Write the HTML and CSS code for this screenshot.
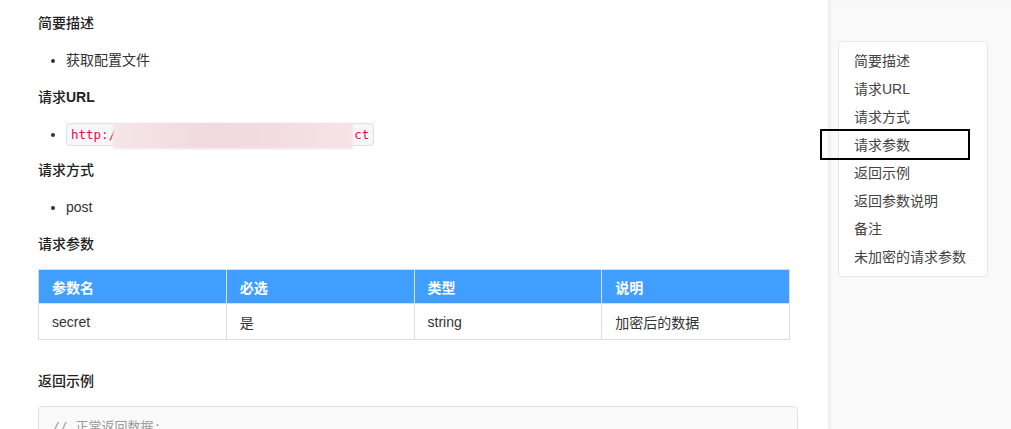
FILE: index.html
```html
<!DOCTYPE html>
<html lang="zh">
<head>
<meta charset="utf-8">
<title>接口文档</title>
<link rel="stylesheet" href="styles.css">
</head>
<body>
<div class="page">
  <main class="doc">
    <h3 class="h">简要描述</h3>
    <ul class="list"><li>获取配置文件</li></ul>
    <h3 class="h">请求<span class="latin">URL</span></h3>
    <ul class="list list-code"><li><code class="code">http:/<span class="blur"></span>ct</code></li></ul>
    <h3 class="h">请求方式</h3>
    <ul class="list"><li>post</li></ul>
    <h3 class="h">请求参数</h3>
    <table class="tbl">
      <thead>
        <tr><th>参数名</th><th>必选</th><th>类型</th><th>说明</th></tr>
      </thead>
      <tbody>
        <tr><td>secret</td><td>是</td><td>string</td><td>加密后的数据</td></tr>
      </tbody>
    </table>
    <h3 class="h h-gap">返回示例</h3>
    <pre class="pre">// 正常返回数据:</pre>
  </main>
  <aside class="side">
    <nav class="toc">
      <a class="toc-item">简要描述</a>
      <a class="toc-item">请求URL</a>
      <a class="toc-item">请求方式</a>
      <a class="toc-item">请求参数</a>
      <a class="toc-item">返回示例</a>
      <a class="toc-item">返回参数说明</a>
      <a class="toc-item">备注</a>
      <a class="toc-item">未加密的请求参数</a>
    </nav>
    <div class="mark"></div>
  </aside>
</div>
</body>
</html>
```

FILE: styles.css
```css
html, body {
  margin: 0;
  padding: 0;
  background: #fff;
}
body {
  font-family: "Liberation Sans", "Noto Sans CJK SC", sans-serif;
  font-size: 14px;
  color: #333;
  overflow: hidden;
  height: 429px;
}
.page {
  display: flex;
  height: 429px;
}
.doc {
  width: 790px;
  flex: none;
  padding: 13px 0 0 38px;
  box-sizing: content-box;
}
.h {
  margin: 0;
  font-size: 14px;
  line-height: 20px;
  font-weight: 500;
  color: #222;
}
.latin {
  font-weight: bold;
}
.h-gap {
  margin-top: 31px;
}
.list {
  margin: 17px 0 17px;
  padding-left: 28px;
  line-height: 20px;
}
.list-code {
  margin-bottom: 16px;
}
.list-code li {
  height: 20px;
}
.code {
  display: inline;
  padding: 3px 4px 3px 4px;
  font-family: "DejaVu Sans Mono", monospace;
  font-size: 12.5px;
  color: #dd1144;
  background: #f7f7f9;
  border: 1px solid #e1e1e8;
  border-radius: 3px;
}
.blur {
  display: inline-block;
  width: 240px;
  height: 26px;
  margin: -3px 1px -3px -3px;
  vertical-align: middle;
  background: linear-gradient(90deg, #f5e6e9, #f1d9de 40%, #f3dde1 70%, #f5e4e7);
  filter: blur(1px);
}
.tbl {
  margin-top: 15px;
  width: 752px;
  border-collapse: collapse;
  table-layout: fixed;
}
.tbl th, .tbl td {
  border: 1px solid #ddd;
  text-align: left;
  padding: 0 13px;
  font-size: 14px;
}
.tbl th {
  background: #409eff;
  color: #fff;
  font-weight: bold;
  height: 33px;
}
.tbl td {
  height: 35px;
  color: #333;
}
.pre {
  margin: 15px 0 0;
  width: 732px;
  height: 60px;
  padding: 11px 13px;
  box-sizing: content-box;
  background: #f9f9f9;
  border: 1px solid #e1e1e8;
  border-radius: 4px;
  font-family: "DejaVu Sans Mono", "Noto Sans CJK SC", monospace;
  font-size: 13px;
  line-height: 18px;
  color: #999;
}
.side {
  flex: 1;
  position: relative;
  background: #f9f9f9;
  box-shadow: inset 3px 0 4px -2px rgba(0, 0, 0, 0.08);
  padding: 41px 0 0 10px;
}
.toc {
  width: 148px;
  background: #fff;
  border: 1px solid #e6e6e6;
  border-radius: 4px;
  padding: 5px 0 5px;
  display: flex;
  flex-direction: column;
}
.toc-item {
  display: block;
  padding-left: 15px;
  line-height: 28px;
  font-size: 14px;
  color: #444;
  text-decoration: none;
}
.mark {
  position: absolute;
  left: -8px;
  top: 129px;
  width: 146px;
  height: 27px;
  border: 2px solid #000;
}
```
